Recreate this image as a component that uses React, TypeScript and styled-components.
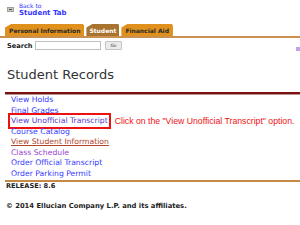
import React from 'react';
import styled, { createGlobalStyle } from 'styled-components';

const GlobalStyle = createGlobalStyle`
  body {
    margin: 0;
    background: #ffffff;
    font-family: "DejaVu Sans", Verdana, sans-serif;
  }
`;

const Page = styled.div`
  width: 300px;
  height: 225px;
  overflow: hidden;
  position: relative;
`;

const BackBar = styled.div`
  display: flex;
  align-items: center;
  gap: 5px;
  padding: 3px 0 0 7px;
`;

const BackIcon = styled.div`
  width: 5px;
  height: 3px;
  background: #c8c8c0;
  border: 1px solid #a0a098;
  display: flex;
  align-items: center;
  justify-content: center;
  &::after {
    content: '';
    width: 3px;
    height: 1px;
    background: #505050;
  }
`;

const BackLink = styled.a`
  color: #3333ff;
  font-size: 6px;
  line-height: 6.5px;
  text-decoration: none;
  b {
    font-size: 7px;
  }
`;

const TabBar = styled.div`
  display: flex;
  gap: 2px;
  margin-top: 8px;
  padding-left: 5px;
  border-bottom: 2px solid #c99050;
`;

const Tab = styled.div<{ $active?: boolean }>`
  height: 12px;
  padding: 0 ${p => (p.$active ? '3px' : '4px')};
  display: flex;
  align-items: center;
  font-size: 6px;
  font-weight: bold;
  color: ${p => (p.$active ? '#ffffff' : '#2a2a2a')};
  background: ${p => (p.$active ? '#a8732e' : '#e0901c')};
  border-top-right-radius: 1px;
  clip-path: polygon(0 100%, 0 30%, 6px 0, 98% 0, 100% 12%, 100% 100%);
`;

const SearchRow = styled.div`
  display: flex;
  align-items: center;
  padding: 3px 0 0 7px;
  position: relative;
`;

const SearchLabel = styled.span`
  font-size: 6.6px;
  font-weight: bold;
  color: #222;
  width: 28px;
`;

const SearchInput = styled.div`
  width: 64px;
  height: 7px;
  border: 1px solid #c0c0c0;
  background: #fff;
`;

const GoButton = styled.div`
  margin-left: 4px;
  width: 15px;
  height: 7px;
  border: 1px solid #c4c4c4;
  background: #ebebeb;
  border-radius: 1px;
  font-size: 4.5px;
  color: #444;
  display: flex;
  align-items: center;
  justify-content: center;
`;

const EdgeMark = styled.span`
  position: absolute;
  right: 0;
  top: 9px;
  width: 4px;
  height: 4px;
  background: #c4a0e8;
`;

const Title = styled.h1`
  margin: 17px 0 0 7px;
  font-size: 13px;
  font-weight: normal;
  color: #333;
  line-height: 15px;
`;

const DarkRule = styled.div`
  margin: 10px 0 0 5px;
  height: 2px;
  background: #7a1010;
  border-bottom: 1px solid #c09090;
`;

const LinkList = styled.ul`
  list-style: none;
  margin: 0;
  padding: 0 0 0 11px;
`;

const Item = styled.li`
  display: flex;
  align-items: center;
  height: 10.5px;
`;

const Link = styled.a<{ $color: string; $underline?: boolean; $boxed?: boolean }>`
  color: ${p => p.$color};
  font-size: 7.7px;
  line-height: 10px;
  text-decoration: ${p => (p.$underline ? 'underline' : 'none')};
  text-decoration-thickness: 1px;
  text-underline-offset: 1px;
  white-space: nowrap;
  ${p =>
    p.$boxed &&
    `
    outline: 2px solid #ee1111;
    outline-offset: 1px;
  `}
`;

const Note = styled.span`
  margin-left: 7px;
  color: #ee1111;
  font-family: "Liberation Sans", Arial, sans-serif;
  font-size: 8.7px;
  white-space: nowrap;
`;

const OrangeRule = styled.div`
  margin: 1px 0 0 5px;
  height: 2px;
  background: #c68a45;
`;

const Release = styled.div`
  margin: 0 0 0 6px;
  font-size: 6.6px;
  line-height: 8px;
  font-weight: bold;
  color: #222;
`;

const Copyright = styled.div`
  margin: 12px 0 0 6px;
  font-size: 6.8px;
  line-height: 8px;
  font-weight: bold;
  color: #222;
  white-space: nowrap;
`;

const links = [
  { text: 'View Holds', color: '#3838ff' },
  { text: 'Final Grades', color: '#3838ff' },
  { text: 'View Unofficial Transcript', color: '#5a3ccc', boxed: true },
  { text: 'Course Catalog', color: '#3838ff' },
  { text: 'View Student Information', color: '#b0442c', underline: true },
  { text: 'Class Schedule', color: '#9a3fcf' },
  { text: 'Order Official Transcript', color: '#3838ff' },
  { text: 'Order Parking Permit', color: '#3838ff' },
];

const App: React.FC = () => (
  <Page>
    <GlobalStyle />
    <BackBar>
      <BackIcon />
      <BackLink>
        Back to
        <br />
        <b>Student Tab</b>
      </BackLink>
    </BackBar>
    <TabBar>
      <Tab>Personal Information</Tab>
      <Tab $active>Student</Tab>
      <Tab>Financial Aid</Tab>
    </TabBar>
    <SearchRow>
      <SearchLabel>Search</SearchLabel>
      <SearchInput />
      <GoButton>Go</GoButton>
      <EdgeMark />
    </SearchRow>
    <Title>Student Records</Title>
    <DarkRule />
    <LinkList>
      {links.map((link, index) => (
        <Item key={index}>
          <Link $color={link.color} $underline={link.underline} $boxed={link.boxed}>
            {link.text}
          </Link>
          {link.boxed && <Note>Click on the "View Unofficial Transcript" option.</Note>}
        </Item>
      ))}
    </LinkList>
    <OrangeRule />
    <Release>RELEASE: 8.6</Release>
    <Copyright>© 2014 Ellucian Company L.P. and its affiliates.</Copyright>
  </Page>
);

export default App;
